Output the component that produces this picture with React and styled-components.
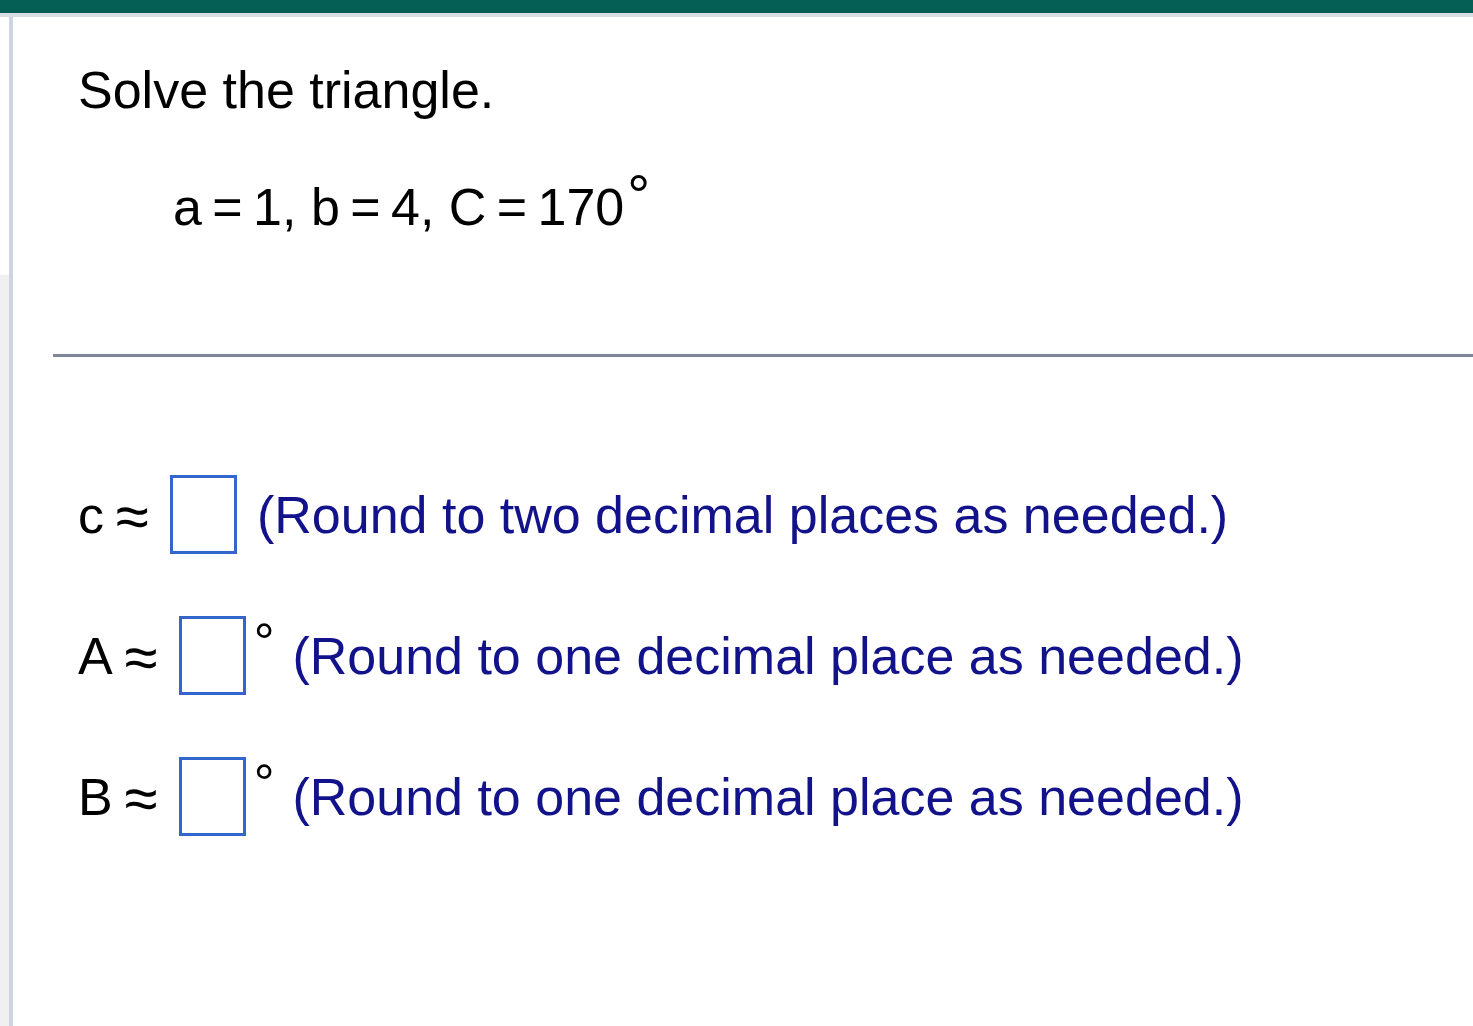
import React from "react";
import styled, { createGlobalStyle } from "styled-components";

// ========== GLOBAL ===========
const GlobalStyle = createGlobalStyle`
  html, body {
    margin: 0;
    padding: 0;
    background: #ffffff;
  }
  body {
    font-family: "Liberation Sans", Arial, sans-serif;
    color: #000;
  }
`;

// ========== STYLED COMPONENTS ===========
const Page = styled.div`
  min-height: 100vh;
  display: flex;
  flex-direction: column;
`;

const TopBar = styled.div`
  height: 13px;
  background: #065f55;
  border-bottom: 4px solid #d7dce5;
  flex-shrink: 0;
`;

const Body = styled.div`
  flex: 1;
  display: flex;
`;

const Gutter = styled.div`
  width: 9px;
  display: flex;
  flex-direction: column;
`;

const GutterTop = styled.div`
  height: 258px;
  background: #ffffff;
`;

const GutterRest = styled.div`
  flex: 1;
  background: #f0f0f0;
`;

const PanelEdge = styled.div`
  width: 4px;
  background: #cdd4e2;
`;

const Content = styled.div`
  flex: 1;
  padding-left: 40px;
`;

const Question = styled.div`
  padding-left: 25px;
`;

const Prompt = styled.p`
  margin: 43px 0 0;
  font-size: 52px;
  line-height: 60px;
`;

const Equation = styled.div`
  margin: 57px 0 0 95px;
  font-size: 52px;
  line-height: 60px;
  white-space: nowrap;
`;

const Rel = styled.span`
  margin: 0 0.2em;
`;

const Sup = styled.span`
  display: inline-block;
  font-size: 1.1em;
  vertical-align: top;
  line-height: 0;
  transform: translateY(18px);
  margin-left: 3px;
`;

const Rule = styled.hr`
  margin: 117px 0 0;
  border: none;
  height: 3px;
  background: #7f8698;
  box-shadow: 0 0 1px #c9cdd8;
`;

const Answers = styled.div`
  padding-left: 25px;
  margin-top: 118px;
  display: flex;
  flex-direction: column;
  gap: 62px;
`;

const Row = styled.div`
  display: flex;
  align-items: center;
  height: 79px;
  font-size: 52px;
  white-space: nowrap;
`;

const Label = styled.span`
  display: flex;
  align-items: center;
  gap: 12px;
  margin-right: 21px;
`;

const Approx = styled.span`
  display: inline-block;
  font-family: "Liberation Sans", Arial, sans-serif;
  font-size: 60px;
  line-height: 1;
  transform: translateY(2px);
`;

const Box = styled.span`
  box-sizing: border-box;
  width: 67px;
  height: 79px;
  border: 3px solid #3366cc;
  background: #fff;
`;

const Degree = styled.span`
  align-self: flex-start;
  font-size: 52px;
  line-height: 52px;
  margin-left: 8px;
`;

const Hint = styled.span`
  color: #12128a;
  margin-left: ${({ $after }) => ($after ? "18px" : "20px")};
`;

// ========== DATA ===========
const answers = [
  { label: "c", degree: false, hint: "(Round to two decimal places as needed.)" },
  { label: "A", degree: true, hint: "(Round to one decimal place as needed.)" },
  { label: "B", degree: true, hint: "(Round to one decimal place as needed.)" },
];

// ========== COMPONENT ===========
const App = () => {
  return (
    <>
      <GlobalStyle />
      <Page>
        <TopBar />
        <Body>
          <Gutter>
            <GutterTop />
            <GutterRest />
          </Gutter>
          <PanelEdge />
          <Content>
            <Question>
              <Prompt>Solve the triangle.</Prompt>
              <Equation>
                a<Rel>=</Rel>1, b<Rel>=</Rel>4, C<Rel>=</Rel>170<Sup>°</Sup>
              </Equation>
            </Question>
            <Rule />
            <Answers>
              {answers.map((a, i) => (
                <Row key={i}>
                  <Label>
                    {a.label}
                    <Approx>≈</Approx>
                  </Label>
                  <Box />
                  {a.degree && <Degree>°</Degree>}
                  <Hint $after={a.degree}>{a.hint}</Hint>
                </Row>
              ))}
            </Answers>
          </Content>
        </Body>
      </Page>
    </>
  );
};

export default App;
